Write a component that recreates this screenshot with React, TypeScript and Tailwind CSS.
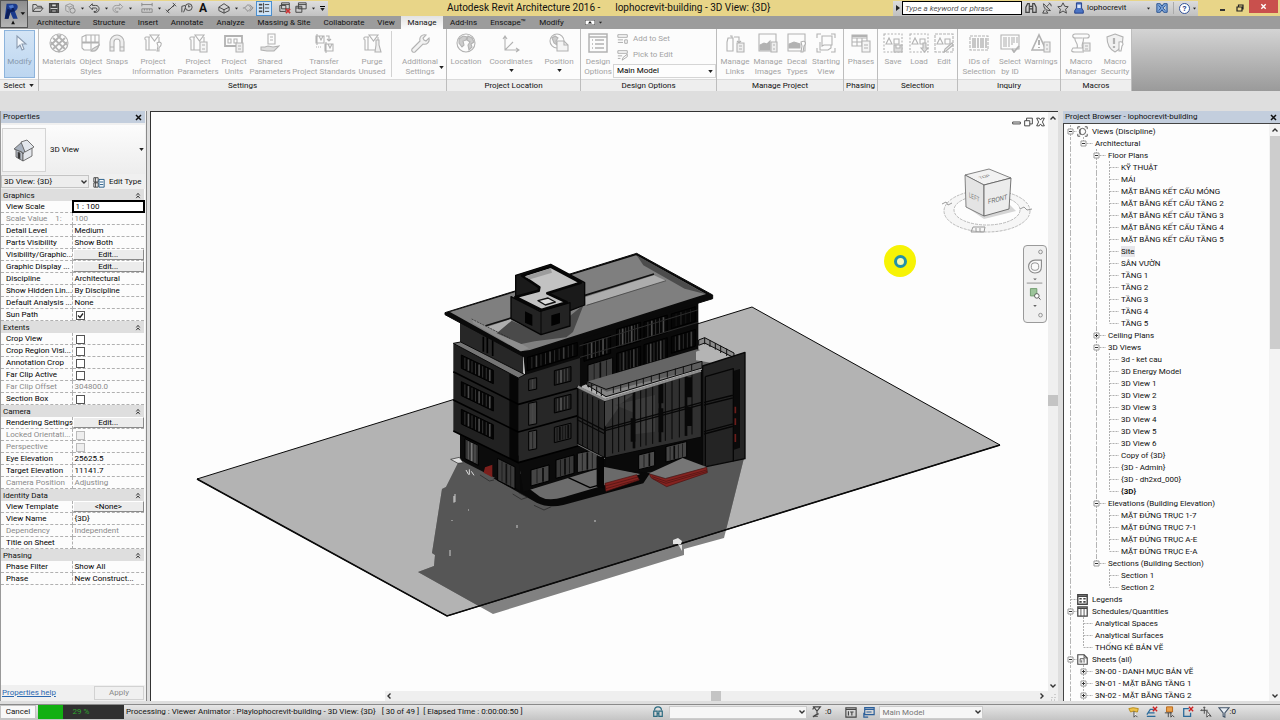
import React from 'react'
import clsx from 'clsx'

type Children = { children?: React.ReactNode }

/* ---------- small drawing helpers ---------- */

function Caret({ className = "" }: { className?: string }) {
  return (
    <svg viewBox="0 0 6 4" className={clsx("w-[5px] h-[3px] shrink-0", className)}>
      <path d="M0 0h6L3 4z" fill="#222" />
    </svg>
  )
}

function Chevron({ d, className = "" }: { d: string; className?: string }) {
  return (
    <svg viewBox="0 0 8 8" className={clsx("w-2 h-2 shrink-0", className)}>
      <path d={d} fill="none" stroke="#333" strokeWidth="1.4" />
    </svg>
  )
}

const UP = "M1.5 5.5L4 3l2.500 2.500"
const DOWN = "M1.500 2.500L4 5l2.500-2.500"
const LEFT = "M5.500 1.500L3 4l2.500 2.500"
const RIGHT = "M2.500 1.500L5 4l-2.500 2.500"

function Gray({ children }: Children) {
  return (
    <svg viewBox="0 0 20 20" className="w-5 h-5 shrink-0" fill="none" stroke="#b2b2b2" strokeWidth="1.100">
      {children}
    </svg>
  )
}

function Tool({ children, className = "" }: Children & { className?: string }) {
  return (
    <svg viewBox="0 0 14 14" className={clsx("w-3 h-3 shrink-0", className)} fill="none" stroke="#444" strokeWidth="1.100">
      {children}
    </svg>
  )
}

/* ---------- ribbon ---------- */

const sheet = (
  <>
    <path d="M3 4h4M3 4c-1.500 0-1.500 3 0 3v10h10" />
    <path d="M6 4v13M7 2h9l-4.500 6z" />
    <path d="M16 4v5" />
  </>
)

const icons: Record<string, React.ReactNode> = {
  cursor: <path d="M7 3v12l3-3 2 5 2-1-2-5h4z" fill="#f4f8fc" stroke="#8b9bb0" />,
  materials: (
    <>
      <circle cx="10" cy="10" r="9" />
      <path d="M4 5l12 11M8 2l10 10M2 9l9 10M16 5L4 16M12 2L2 12M18 9l-9 10" strokeWidth="1.800" />
    </>
  ),
  styles: (
    <>
      <path d="M1 4l4-2h5v7H1zM10 2h8v7h-8M1 10h9v7H3l-2-2zM10 10h8v3M5 2v7M14 2v7" />
      <path d="M10 18c2-4 5-3 8-6-1 4-3 7-8 6z" fill="#ddd" />
    </>
  ),
  snaps: (
    <>
      <path d="M3 18V9a7 7 0 0114 0v9h-4V9a3 3 0 00-6 0v9z" fill="#eee" />
      <path d="M3 14h4M13 14h4" />
    </>
  ),
  info: <>{sheet}<path d="M14 10c3-2 5 0 4 2-1 3-3 1-2 6h-2l1-5z" fill="#fff" /></>,
  params: <>{sheet}<path d="M12 9h7v10h-7z" fill="#f5f5f5" /><path d="M14 12h3M14 16h3" /></>,
  units: (
    <>
      <path d="M1 3h17v10H1z" strokeWidth="1.800" />
      <path d="M4 6h3v4H4zM10 6h3v4h-3z" />
      <path d="M12 10h7v9h-7z" fill="#eee" />
      <path d="M14 13h3M14 16h3" />
    </>
  ),
  shared: (
    <>
      <path d="M8 1h7v10H8zM10 4h3M10 7h3" />
      <path d="M1 14h4l3-1 5 1 6-1-5 5H7l-6-1z" fill="#ddd" />
    </>
  ),
  transfer: (
    <>
      <path d="M2 3h8v7H2zM3 1v11M5 3l2 4 2-4" />
      <path d="M12 3h3v5m-2-2l2 2 2-2" />
      <path d="M11 11h8v7h-8zM12 9v11M14 11l2 4 2-4" />
      <path d="M2 14h6" strokeDasharray="1 1" />
    </>
  ),
  purge: <>{sheet}<path d="M14 7h3v5l2 7h-6l1-7z" fill="#eee" /></>,
  wrench: <path d="M2 16l8-8c-1-4 2-7 6-6l-3 3 1 2 2 1 3-3c1 4-2 7-6 6l-8 8c-2 1-4-1-3-3z" fill="#f2f2f2" />,
  globe: (
    <>
      <circle cx="10" cy="10" r="9" />
      <path d="M3 6l4-3 4 1-1 3-3 1 1 4-2 2-3-4zM12 3l4 2 2 4-3 2 1 3-3 3-1-5 2-3-3-2z" fill="#ccc" />
    </>
  ),
  coords: <path d="M4 4v13h13M4 17l8-8M2 6l2-3 2 3M15 15l3 2-3 2" />,
  position: (
    <>
      <circle cx="8" cy="8" r="7" />
      <path d="M3 5l3-2 3 2-2 3 1 4-3-2z" fill="#ccc" />
      <path d="M8 8h7l4 4v6H8z" fill="#f4f4f4" />
      <path d="M15 8v4h4" />
    </>
  ),
  options: (
    <>
      <path d="M1 1h18v18H1zM1 4h18" strokeWidth="1.500" />
      <path d="M4 7h1M7 7h9M4 11h1M7 11h9M4 15h1M7 15h9" strokeWidth="1.600" />
    </>
  ),
  links: (
    <>
      <path d="M3 5h5v13H2v-9l1-4zM5 3h2v2M9 4h5v6M12 8l2 2 2-2" />
      <path d="M12 10h7v9h-7z" fill="#eee" />
      <path d="M14 13h3M14 16h3" />
    </>
  ),
  images: (
    <>
      <path d="M1 1h17v17H1z" />
      <path d="M2 17v-5l4-2 3 1 3-3v9z" fill="#b2b2b2" />
      <path d="M13 9h6v10h-6z" fill="#eee" />
      <path d="M15 12h2M15 16h2" />
    </>
  ),
  decal: (
    <>
      <path d="M1 1h17v17H1z" />
      <path d="M2 15v-4l5-2 6 2v4z" fill="#b2b2b2" />
      <path d="M14 9c4-2 6 1 3 4l-1 6h-2l1-6z" fill="#fff" />
    </>
  ),
  starting: (
    <>
      <path d="M1 5V1h4M15 1h4v4M1 15v4h4M15 19h4v-4" />
      <path d="M6 3h10v9H8l-2 1zM4 9v8h8l3-2v-3" />
    </>
  ),
  phases: (
    <>
      <path d="M1 2h15v11H1zM1 5h15M1 9h15M6 5v8M11 5v8" />
      <path d="M1 3h15" strokeWidth="2" />
      <path d="M11 8h8v11h-8z" fill="#f4f4f4" />
      <path d="M13 12h4M13 15h4" />
    </>
  ),
  save: (
    <>
      <path d="M1 1h18v18H1z" strokeDasharray="2 1.500" />
      <path d="M3 11l3-6 3 6zM11 6h5v5h-5z" />
      <path d="M11 12h8v7h-8zM13 12v3h4v-3" fill="#ddd" />
    </>
  ),
  load: (
    <>
      <path d="M1 1h18v18H1z" strokeDasharray="2 1.500" />
      <path d="M3 11l3-6 3 6zM11 6h5v5h-5z" />
      <path d="M14 10h3v5h2l-3.500 4-3.500-4h2z" fill="#ddd" />
    </>
  ),
  edit: (
    <>
      <path d="M1 1h18v18H1z" strokeDasharray="3 1" />
      <path d="M3 11l3-6 3 6zM11 6h5v5h-5z" />
      <path d="M10 19l1-3 7-6 1 2-7 6z" fill="#eee" />
    </>
  ),
  ids: (
    <>
      <path d="M1 3h18v14H1z" strokeDasharray="3 1" />
      <path d="M4 5v10M6 5v10M9 5v10M12 5v10M14 5v10M17 5v10" strokeWidth="1.400" />
    </>
  ),
  selectId: (
    <>
      <path d="M1 2h18v14H1zM4 4v10M6 4v10M9 4v10M12 4v8M14 4v6M17 4v6" />
      <path d="M12 16l2 3 5-6" strokeWidth="1.800" />
    </>
  ),
  warnings: (
    <>
      <path d="M1 17L8 2l7 15z" strokeWidth="1.600" />
      <path d="M8 7v5M8 14v1" strokeWidth="2" />
      <path d="M13 9h6v10h-6z" fill="#eee" />
      <path d="M15 12h2M15 16h2" />
    </>
  ),
  macro: (
    <>
      <path d="M4 1h12c3 0 3 4 0 4h-4c2 4-3 6 0 10H2c-3 4 0 4 2 4h9M3 5h8M4 1C1 1 1 5 4 5c-1 4 4 5 2 10" />
      <path d="M12 10h7v8h-7z" fill="#eee" />
      <path d="M14 13h3M14 16h3" />
    </>
  ),
  security: (
    <>
      <path d="M10 1l8 3c0 7-2 12-8 15C4 16 2 11 2 4z" fill="#f1f1f1" />
      <path d="M9 5v6M9 13v2" strokeWidth="2.200" />
      <path d="M14 9c4-1 5 2 3 4l-1 5h-2z" fill="#fff" />
    </>
  ),
}

interface RibbonButtonProps {
  icon: string;
  lines: string[];
  width: string;
  drop?: boolean;
}

function RibbonButton({ icon, lines, width, drop }: RibbonButtonProps) {
  return (
    <button className={clsx("relative flex flex-col items-center shrink-0 pt-1 text-[#a3a3a3]", width)}>
      <Gray>{icons[icon]}</Gray>
      <span className="mt-1 flex flex-col items-center leading-[10px] whitespace-nowrap">
        {lines.map((l) => <span key={l}>{l}</span>)}
      </span>
      {drop && <Caret className={lines.length > 1 ? "absolute right-0 top-[37px]" : "mt-[2px]"} />}
    </button>
  )
}

function Panel({ title, width, children }: Children & { title: React.ReactNode; width: string }) {
  return (
    <section className={clsx("flex flex-col shrink-0 border-r border-[#bdbdbd]", width)}>
      <div className="flex flex-1 bg-[#fcfcfc] pl-[2px]">{children}</div>
      <h2 className="h-3 leading-[11px] bg-[#eeeeee] border-t border-[#dadada] flex items-center justify-center gap-1 whitespace-nowrap">
        {title}
      </h2>
    </section>
  )
}

function Ribbon() {
  return (
    <div className="flex h-[62px] bg-linear-to-b from-[#d4d4d4] to-[#9a9a9a]">
      <Panel width="w-[39px]" title={<>Select <Caret /></>}>
        <button className="relative w-[31px] h-[48px] ml-[2px] mt-[1px] flex flex-col items-center border border-[#8db4dc] bg-linear-to-b from-[#d3e4f5] to-[#bcd6f0] text-[#8799ad] pt-[2px]">
          <Gray>{icons.cursor}</Gray>
          <span className="mt-1 leading-[10px]">Modify</span>
        </button>
      </Panel>
      <Panel width="w-[408px]" title="Settings">
        <RibbonButton icon="materials" lines={["Materials"]} width="w-9" />
        <RibbonButton icon="styles" lines={["Object", "Styles"]} width="w-7" />
        <RibbonButton icon="snaps" lines={["Snaps"]} width="w-6" />
        <RibbonButton icon="info" lines={["Project", "Information"]} width="w-12" />
        <RibbonButton icon="params" lines={["Project", "Parameters"]} width="w-[42px]" />
        <RibbonButton icon="units" lines={["Project", "Units"]} width="w-[30px]" />
        <RibbonButton icon="shared" lines={["Shared", "Parameters"]} width="w-[42px]" />
        <RibbonButton icon="transfer" lines={["Transfer", "Project Standards"]} width="w-[66px]" />
        <RibbonButton icon="purge" lines={["Purge", "Unused"]} width="w-[30px]" />
        <div className="w-px my-[2px] mx-1 bg-[#d2d2d2]" />
        <RibbonButton icon="wrench" lines={["Additional", "Settings"]} width="w-12" drop />
      </Panel>
      <Panel width="w-[134px]" title="Project Location">
        <RibbonButton icon="globe" lines={["Location"]} width="w-[34px]" />
        <RibbonButton icon="coords" lines={["Coordinates"]} width="w-14" drop />
        <RibbonButton icon="position" lines={["Position"]} width="w-10" drop />
      </Panel>
      <Panel width="w-[136px]" title="Design Options">
        <RibbonButton icon="options" lines={["Design", "Options"]} width="w-[30px]" />
        <div className="flex-1 flex flex-col justify-between pt-1 pb-px text-[#a3a3a3]">
          <button className="flex items-center gap-1 h-3 pl-1">
            <Tool className="stroke-[#aaa]"><path d="M1 2h11v3H1zM1 8h6M1 11h6M9 8h3v4H9z" /></Tool>
            Add to Set
          </button>
          <button className="flex items-center gap-1 h-3 pl-1">
            <Tool className="stroke-[#aaa]"><path d="M1 2h11v3H1zM1 8h5M1 11h3M6 13l1-3 5-4v3z" /></Tool>
            Pick to Edit
          </button>
          <label className="relative flex items-center">
            <select aria-label="Design option" className="appearance-none w-full h-[14px] border border-[#d5d5d5] bg-[#fdfdfd] pl-[3px] text-black">
              <option>Main Model</option>
            </select>
            <Caret className="absolute right-[3px]" />
          </label>
        </div>
      </Panel>
      <Panel width="w-[127px]" title="Manage Project">
        <RibbonButton icon="links" lines={["Manage", "Links"]} width="w-8" />
        <RibbonButton icon="images" lines={["Manage", "Images"]} width="w-[34px]" />
        <RibbonButton icon="decal" lines={["Decal", "Types"]} width="w-6" />
        <RibbonButton icon="starting" lines={["Starting", "View"]} width="w-[34px]" />
      </Panel>
      <Panel width="w-[34px]" title="Phasing">
        <RibbonButton icon="phases" lines={["Phases"]} width="w-[30px]" />
      </Panel>
      <Panel width="w-20" title="Selection">
        <RibbonButton icon="save" lines={["Save"]} width="w-[26px]" />
        <RibbonButton icon="load" lines={["Load"]} width="w-[26px]" />
        <RibbonButton icon="edit" lines={["Edit"]} width="w-6" />
      </Panel>
      <Panel width="w-[103px]" title="Inquiry">
        <RibbonButton icon="ids" lines={["IDs of", "Selection"]} width="w-[38px]" />
        <RibbonButton icon="selectId" lines={["Select", "by ID"]} width="w-6" />
        <RibbonButton icon="warnings" lines={["Warnings"]} width="w-[38px]" />
      </Panel>
      <Panel width="w-[71px]" title="Macros">
        <RibbonButton icon="macro" lines={["Macro", "Manager"]} width="w-9" />
        <RibbonButton icon="security" lines={["Macro", "Security"]} width="w-8" />
      </Panel>
    </div>
  )
}

/* ---------- title bar and tabs ---------- */

function Quick({ label, active, children }: Children & { label: string; active?: boolean }) {
  return (
    <button
      aria-label={label}
      className={clsx("w-4 h-[15px] flex items-center justify-center", active && "bg-[#cfe4f7] border border-[#4a8fd0]")}
    >
      <Tool>{children}</Tool>
    </button>
  )
}

function More() {
  return <button aria-label="More" className="w-2 h-[15px] flex items-center justify-center"><Caret className="scale-75" /></button>
}

function TitleBar() {
  return (
    <header className="relative flex items-center h-4 bg-[#e8d588]">
      <button aria-label="Application menu" className="absolute left-0 top-0 z-10 w-7 h-7 border border-[#555] bg-linear-to-b from-[#8d8d8d] to-[#b5b5b5]">
        <svg viewBox="0 0 28 28" className="w-full h-full">
          <path d="M4 19L6 3h9c4 0 4 6 0 8l3 8h-5l-3-7-2 7z" fill="#1b3a8c" />
          <path d="M4 19L7 8l4 2 2-4 2 5-5 1-2 7z" fill="#0c1f5c" />
          <path d="M8 5l5-1 1 3-4 1z" fill="#4d78cc" />
          <path d="M21 12h5l-2.500 3z" fill="#111" />
          <path d="M11 25l2-4 2 4z" fill="#111" />
        </svg>
      </button>
      <div className="flex items-center h-[15px] w-[328px] pl-[30px] bg-linear-to-b from-[#dedede] to-[#c2c2c2]">
        <Quick label="Open"><path d="M1 11V3h4l1 2h5v2M1 11l3-4h9l-3 4z" /></Quick>
        <Quick label="Save"><path d="M2 2h10v10H2zM4 2v4h6V2M4 12V9h6v3" strokeWidth="1.800" /></Quick>
        <Quick label="Sync"><path d="M2 4l5-2 4 2v4M2 4v6l4 2M2 4l4 2 5-2M6 6v3" stroke="#999" /><circle cx="10" cy="10" r="3" stroke="#888" /></Quick>
        <More />
        <Quick label="Undo"><path d="M5 2L1.500 5.500 5 9V7h4c2 0 2 3 0 4H7v1h3c4-1 4-8-1-8H5z" /></Quick>
        <More />
        <Quick label="Redo"><path d="M9 2l3.500 3.500L9 9V7H5C3 7 3 10 5 11h2v1H4C0 11 0 4 5 4h4z" stroke="#999" /></Quick>
        <More />
        <span className="w-[5px]" />
        <Quick label="Measure"><path d="M1 3h12M1 1v4M13 1v4M1 8h12v4H1zM4 8v2M7 8v2M10 8v2" stroke="#888" /></Quick>
        <More />
        <Quick label="Aligned dimension"><path d="M2 12L12 2M1 9l4 4M9 1l4 4M3 11l2-3M11 3L9 6" /></Quick>
        <Quick label="Tag"><path d="M1 12V5l4-1M3 12l2-5" /><circle cx="9" cy="6" r="4" /><path d="M9 3v3l2-1" /></Quick>
        <button aria-label="Text" className="w-4 text-[12px] leading-[15px] font-bold">A</button>
        <span className="w-[5px]" />
        <Quick label="3D view"><path d="M1 6l6-4 6 4v4l-6 3-6-3zM1 6l6 3 6-3M7 9v4" /></Quick>
        <More />
        <Quick label="Section"><path d="M7 3l4 4-4 4-4-4zM1 7h2M9 3l4 4-4 4" stroke="#888" /></Quick>
        <Quick label="Thin lines" active><path d="M1 3h4M1 7h4M1 11h4" strokeWidth="2" /><path d="M8 3h5M8 7h5M8 11h5M6.500 1v12" /></Quick>
        <span className="w-[5px]" />
        <Quick label="Close hidden"><path d="M3 1h9v7H3zM1 4h7v7H1zM3 3h9" /><path d="M8 8l5 5M13 8l-5 5" stroke="#c33" strokeWidth="1.800" /></Quick>
        <Quick label="Switch windows"><path d="M4 1h9v7H4zM1 5h7v7H1zM1 7h7M4 3h9" /></Quick>
        <More />
        <button aria-label="Customize" className="w-[10px] flex flex-col items-center gap-[1px]">
          <span className="w-[5px] h-px bg-black" />
          <Caret />
        </button>
      </div>
      <h1 className="flex-1 pl-[119px] text-[10px] leading-4 whitespace-pre">
        Autodesk Revit Architecture 2016 -{"      "}lophocrevit-building - 3D View: {"{3D}"}
      </h1>
      <div className="flex items-center h-[15px] w-[305px] bg-linear-to-b from-[#dcdcdc] to-[#c0c0c0]">
        <svg viewBox="0 0 4 6" className="w-1 h-[6px] ml-[3px] mr-[2px]"><path d="M0 0l4 3-4 3z" fill="#222" /></svg>
        <input aria-label="Search help" placeholder="Type a keyword or phrase" className="w-[120px] h-[14px] border border-black bg-white px-[2px] italic placeholder:text-[#555]" />
        <button aria-label="Search" className="ml-[3px]">
          <Tool><path d="M1 12V6l2-4h2v10zM9 12V2h2l2 4v6zM5 5h4v3H5z" strokeWidth="1.400" /></Tool>
        </button>
        <button aria-label="Subscription" className="ml-1">
          <Tool><path d="M3 2c0 6 3 8 8 8zM6 6l4-4M9 1a4 4 0 013 4M4 9l-2 4h6l-2-3" /></Tool>
        </button>
        <button aria-label="Favorites" className="ml-1">
          <Tool><path d="M7 1l2 4 4 .5-3 3 1 4.500-4-2.500L3 13l1-4.500-3-3L5 5z" /></Tool>
        </button>
        <button className="ml-1 flex items-center gap-[2px]">
          <Tool><path d="M4 1h6v6l2 3v3H2v-3l2-3z" fill="#4b74c4" stroke="#24408a" /><path d="M5 3h4v4H5z" fill="#dfe8f8" stroke="none" /></Tool>
          lophocrevit
        </button>
        <span className="flex-1" />
        <More />
        <button aria-label="Exchange apps" className="ml-1">
          <Tool><path d="M1 2h4l2 3 2-3h4v10H9L7 9l-2 3H1zM3 4l3 3-3 3M11 4L8 7l3 3" stroke="#234f8e" fill="#7fa6da" /></Tool>
        </button>
        <span className="w-px h-3 bg-[#aaa] mx-[5px]" />
        <button aria-label="Help" className="w-[11px] h-[11px] rounded-full border border-[#34549a] text-[#24408a] bg-white leading-[9px] font-bold">?</button>
        <More />
      </div>
      <div className="flex w-[82px] h-full justify-end pr-[2px]">
        <button aria-label="Minimize" className="w-[17px] flex items-center justify-center pt-[3px]"><span className="w-[5px] h-[2px] bg-[#333]" /></button>
        <button aria-label="Restore" className="w-[17px] flex items-center justify-center mr-[1px]">
          <svg viewBox="0 0 8 8" className="w-2 h-2" fill="none" stroke="#222" strokeWidth="1.200"><path d="M1 3h5v4H1zM2.500 3V1H7v4H6" /></svg>
        </button>
        <button aria-label="Close" className="w-[29px] h-[13px] bg-[#c9504d] flex items-center justify-center">
          <svg viewBox="0 0 8 8" className="w-[7px] h-[7px]"><path d="M1.500 1.500l5 5M6.500 1.500l-5 5" stroke="#fff" strokeWidth="1.600" /></svg>
        </button>
      </div>
    </header>
  )
}

const tabs = [
  { name: "Architecture", w: "w-[55px]" },
  { name: "Structure", w: "w-[46px]" },
  { name: "Insert", w: "w-8" },
  { name: "Annotate", w: "w-[46px]" },
  { name: "Analyze", w: "w-[41px]" },
  { name: "Massing & Site", w: "w-[66px]" },
  { name: "Collaborate", w: "w-[54px]" },
  { name: "View", w: "w-[30px]" },
  { name: "Manage", w: "w-[42px]" },
  { name: "Add-Ins", w: "w-[41px]" },
  { name: "Enscape™", w: "w-12" },
  { name: "Modify", w: "w-[39px]" },
]

function Tabs() {
  return (
    <nav className="flex h-[13px] pl-[31px] bg-[#9c9c9c]">
      {tabs.map((t) => (
        <button
          key={t.name}
          className={clsx("leading-[13px] whitespace-nowrap", t.w, t.name === "Manage" && "bg-linear-to-b from-[#e2e2e2] to-[#fcfcfc]")}
        >
          {t.name}
        </button>
      ))}
      <button aria-label="Ribbon display" className="flex items-center gap-[3px] ml-[14px]">
        <svg viewBox="0 0 10 5" className="w-[10px] h-[5px]"><path d="M0 0h10v5H0z" fill="#fff" stroke="#444" /><path d="M3 3.500h4L5 1z" fill="#222" /></svg>
        <Caret className="scale-75" />
      </button>
    </nav>
  )
}

/* ---------- properties palette ---------- */

type Prop = { name: string; value?: string; kind?: "edit" | "check" | "input"; off?: boolean; on?: boolean }

const groups: { title: string; rows: Prop[] }[] = [
  {
    title: "Graphics",
    rows: [
      { name: "View Scale", value: "1 : 100", kind: "input" },
      { name: "Scale Value    1:", value: "100", off: true },
      { name: "Detail Level", value: "Medium" },
      { name: "Parts Visibility", value: "Show Both" },
      { name: "Visibility/Graphic...", value: "Edit...", kind: "edit" },
      { name: "Graphic Display ...", value: "Edit...", kind: "edit" },
      { name: "Discipline", value: "Architectural" },
      { name: "Show Hidden Lin...", value: "By Discipline" },
      { name: "Default Analysis ...", value: "None" },
      { name: "Sun Path", kind: "check", on: true },
    ],
  },
  {
    title: "Extents",
    rows: [
      { name: "Crop View", kind: "check" },
      { name: "Crop Region Visi...", kind: "check" },
      { name: "Annotation Crop", kind: "check" },
      { name: "Far Clip Active", kind: "check" },
      { name: "Far Clip Offset", value: "304800.0", off: true },
      { name: "Section Box", kind: "check" },
    ],
  },
  {
    title: "Camera",
    rows: [
      { name: "Rendering Settings", value: "Edit...", kind: "edit" },
      { name: "Locked Orientati...", kind: "check", off: true },
      { name: "Perspective", kind: "check", off: true },
      { name: "Eye Elevation", value: "25625.5" },
      { name: "Target Elevation", value: "11141.7" },
      { name: "Camera Position", value: "Adjusting", off: true },
    ],
  },
  {
    title: "Identity Data",
    rows: [
      { name: "View Template", value: "<None>", kind: "edit" },
      { name: "View Name", value: "{3D}" },
      { name: "Dependency", value: "Independent", off: true },
      { name: "Title on Sheet", value: "" },
    ],
  },
  {
    title: "Phasing",
    rows: [
      { name: "Phase Filter", value: "Show All" },
      { name: "Phase", value: "New Construct..." },
    ],
  },
]

function PropValue({ p }: { p: Prop }) {
  if (p.kind === "input") {
    return <input aria-label={p.name} defaultValue={p.value} className="block w-full h-[11px] border border-black outline outline-black bg-white px-[2px]" />
  }
  if (p.kind === "edit") {
    return <button className="block w-full h-[11px] leading-[9px] bg-[#ececec] border border-[#fff] border-r-[#8a8a8a] border-b-[#8a8a8a]">{p.value}</button>
  }
  if (p.kind === "check") {
    return (
      <span className="relative flex items-end h-[11px] pl-[3px]">
        <input
          type="checkbox"
          aria-label={p.name}
          defaultChecked={p.on}
          disabled={p.off}
          className="peer appearance-none w-[9px] h-[9px] border border-[#555] bg-white disabled:border-[#bbb] disabled:bg-[#eee]"
        />
        <svg viewBox="0 0 9 9" className="absolute left-[3px] w-[9px] h-[9px] hidden peer-checked:block pointer-events-none">
          <path d="M2 4.500l2 2 3-4" fill="none" stroke="#222" strokeWidth="1.300" />
        </svg>
      </span>
    )
  }
  return <span className="block pl-[2px] truncate">{p.value}</span>
}

function PaletteTitle({ title }: { title: string }) {
  return (
    <div className="flex items-center justify-between h-3 pl-[2px] pr-[3px] bg-[#c3cedd]">
      <h2>{title}</h2>
      <button aria-label={`Close ${title}`}>
        <svg viewBox="0 0 7 7" className="w-[7px] h-[7px]"><path d="M1 1l5 5M6 1L1 6" stroke="#111" strokeWidth="1.500" /></svg>
      </button>
    </div>
  )
}

function Properties() {
  return (
    <aside className="w-[147px] shrink-0 flex flex-col border-r border-[#8a8a8a] border-l border-l-[#999] pr-[1px] bg-[#f0f0f0]">
      <PaletteTitle title="Properties" />
      <div className="flex items-center h-[49px] mt-[2px] px-[1px] bg-linear-to-b from-[#fcfcfc] to-[#ededed]">
        <div className="w-[44px] h-[44px] border border-[#d4d4d4] bg-[#f7f7f7] flex items-center justify-center">
          <svg viewBox="0 0 24 24" className="w-6 h-6" stroke="#555" strokeWidth=".8">
            <path d="M4 11l7 4v8l-7-4z" fill="#b9bfc8" />
            <path d="M11 14l9-4v8l-9 5z" fill="#e4e7ec" />
            <path d="M2 11l8-7 3 9-2 3-1-2z" fill="#a9b2be" />
            <path d="M9 4l6-2 7 7-9 5z" fill="#e3e7ec" />
            <path d="M6 14l2 1v6l-2-1z" fill="#222" />
          </svg>
        </div>
        <span className="flex-1 pl-1">3D View</span>
        <Caret />
      </div>
      <div className="flex items-center h-[15px]">
        <label className="relative flex items-center w-[88px]">
          <select aria-label="Instance" className="appearance-none w-full h-[13px] border border-[#c4c4c4] bg-[#ededed] pl-[2px]">
            <option>{"3D View: {3D}"}</option>
          </select>
          <Chevron d={DOWN} className="absolute right-[1px]" />
        </label>
        <button className="flex items-center gap-1 pl-1">
          <Tool><path d="M1 2h5v5H1zM1 8h5v5H1zM3 2v11" /><path d="M7 4h6v9H7z" fill="#fff" stroke="#235a86" /><path d="M8 7h4M8 10h4" stroke="#235a86" /></Tool>
          Edit Type
        </button>
      </div>
      <div className="flex-1 bg-[#fcfcfc] pr-[1px]">
        <table className="w-full table-fixed border-separate border-spacing-0 leading-[11px]">
          <tbody>
            {groups.map((g) => (
              <React.Fragment key={g.title}>
                <tr className="bg-[#dedede]">
                  <th colSpan={2} className="h-3 p-0 pl-[2px] text-left font-normal">
                    <span className="flex items-center justify-between pr-[3px]">
                      {g.title}
                      <svg viewBox="0 0 6 8" className="w-[6px] h-[7px]" fill="none" stroke="#222"><path d="M1 4l2-2.500L5 4M1 7l2-2.500L5 7" /></svg>
                    </span>
                  </th>
                </tr>
                {g.rows.map((p) => (
                  <tr key={p.name} className={p.off ? "text-[#8a8a8a]" : "text-black"}>
                    <td className="w-[73px] h-3 p-0 pl-[5px] whitespace-pre overflow-hidden border-b border-r border-dashed border-[#b0b0b0]">{p.name}</td>
                    <td className="h-3 p-0 border-b border-dashed border-[#b0b0b0]"><PropValue p={p} /></td>
                  </tr>
                ))}
              </React.Fragment>
            ))}
          </tbody>
        </table>
      </div>
      <div className="flex items-center justify-between h-4 pl-[1px] pr-[1px]">
        <a href="#help" className="text-[#2a68b0] underline">Properties help</a>
        <button className="w-[50px] h-[14px] border border-[#d2d2d2] text-[#8a8a8a]">Apply</button>
      </div>
    </aside>
  )
}

/* ---------- drawing area ---------- */

interface BarsProps {
  x: number;
  y: number;
  w: number;
  h: number;
  n: number;
  k: number; // slope of the wall
  fill?: string;
  line?: string;
}

/* window band on a slanted wall, split by n mullions */
function Bars({ x, y, w, h, n, k, fill = "#060606", line = "#555" }: BarsProps) {
  const step = w / n
  return (
    <g>
      <path d={`M${x} ${y}l${w} ${w * k}v${h}l${-w} ${-w * k}z`} fill={fill} stroke="#000" strokeWidth="3" />
      {Array.from({ length: n - 1 }, (_, i) => {
        const dx = step * (i + 1)
        return <path key={i} d={`M${x + dx} ${y + dx * k + 3}v${h - 6}`} stroke={line} strokeWidth={i % 3 === 1 ? 5 : 2} />
      })}
    </g>
  )
}

const SHADOW = "M458 463L446 487 442 489 432 553 435 555 434 566 418 572 493 614 684 555 684 549 724 538 744 458 640 440z"
const SITE = "M197 479L752 307 1000 445 447 616z"

function Building() {
  return (
    <g transform="translate(430 240) scale(.33333)" strokeLinejoin="round">
      {/* entrance slab */}
      <path d="M190 715L320 788Q355 805 400 795L640 730 660 700 500 640 280 700z" fill="#080808" />
      <path d="M300 748L500 680 630 703 525 735 400 772Q355 785 330 770z" fill="#6c6c6c" />
      <path d="M415 713l65 30 42-12" fill="none" stroke="#000" strokeWidth="4" />

      {/* ground floor */}
      <path d="M90 560L270 650V752L90 660z" fill="#0c0c0c" />
      <path d="M265 660L510 590V685L280 755z" fill="#0b0b0b" />
      <Bars x={105} y={596} w={40} h={60} n={4} k={0.5} fill="#333" line="#777" />
      <Bars x={203} y={655} w={52} h={66} n={4} k={0.5} fill="#3a3a3a" line="#111" />
      <Bars x={303} y={690} w={54} h={48} n={3} k={-0.28} fill="#454545" line="#0a0a0a" />
      <Bars x={378} y={660} w={54} h={55} n={4} k={-0.28} fill="#383838" line="#0a0a0a" />
      <Bars x={442} y={640} w={60} h={58} n={4} k={-0.2} fill="#4b4b4b" line="#0a0a0a" />
      <path d="M165 682l22-8v38l-26-14z" fill="#7c1f1c" />

      {/* block walls */}
      <path d="M70 310L265 408V668L70 573z" fill="#212121" />
      <path d="M265 408L455 348V615L265 668z" fill="#272727" />
      <path d="M238 396l28 14v258l-28-14z" fill="#060606" />
      <path d="M70 395l195 98 190-52M70 480l195 96 190-52M70 573l195 95 190-53" fill="none" stroke="#000" strokeWidth="5" />
      <Bars x={94} y={345} w={96} h={40} n={9} k={0.48} line="#4a4a4a" />
      <Bars x={94} y={425} w={96} h={42} n={9} k={0.48} line="#4a4a4a" />
      <Bars x={94} y={508} w={96} h={44} n={9} k={0.48} line="#4a4a4a" />
      <Bars x={296} y={418} w={24} h={34} n={2} k={-0.2} fill="#333" />
      <Bars x={296} y={490} w={24} h={66} n={2} k={-0.2} fill="#424242" line="#4d4d4d" />
      <Bars x={296} y={575} w={24} h={56} n={2} k={-0.2} fill="#424242" line="#111" />
      <Bars x={373} y={392} w={50} h={44} n={5} k={-0.25} fill="#1c1c1c" line="#565656" />
      <Bars x={373} y={475} w={50} h={44} n={5} k={-0.25} fill="#1c1c1c" line="#565656" />
      <Bars x={373} y={562} w={50} h={46} n={6} k={-0.25} fill="#2b2b2b" line="#0a0a0a" />

      {/* upper floor */}
      <path d="M90 240L280 340V408L90 315z" fill="#272727" />
      <path d="M160 290v45M172 290v50M188 300v48" stroke="#000" strokeWidth="5" />
      <path d="M70 310l22-4 193 98-20 10z" fill="#757575" stroke="#0a0a0a" strokeWidth="3" />
      <path d="M280 338L805 180V330L480 428 450 440V354L285 405z" fill="#0a0a0a" />
      <Bars x={292} y={352} w={150} h={40} n={11} k={-0.3} line="#3c3c3c" />
      <Bars x={462} y={310} w={80} h={54} n={7} k={-0.3} line="#4d4d4d" />
      <Bars x={560} y={268} w={72} h={56} n={8} k={-0.3} line="#4f4f4f" />
      <Bars x={642} y={246} w={70} h={52} n={6} k={-0.3} line="#4a4a4a" />
      <Bars x={724} y={222} w={72} h={44} n={5} k={-0.3} line="#1c1c1c" />
      <Bars x={474} y={375} w={74} h={66} n={4} k={-0.3} fill="#3d3d3d" line="#0a0a0a" />
      <Bars x={560} y={340} w={72} h={60} n={7} k={-0.3} line="#3a3a3a" />
      <Bars x={642} y={314} w={70} h={62} n={7} k={-0.3} line="#444" />
      <Bars x={724} y={290} w={72} h={50} n={6} k={-0.3} line="#3c3c3c" />
      <path d="M448 318l355-108M450 352l355-105" fill="none" stroke="#2c2c2c" strokeWidth="3" />

      {/* main roof */}
      <path d="M45 218L620 40 848 165V176L280 350 45 224z" fill="#0a0a0a" stroke="#0a0a0a" strokeWidth="3" />
      <path d="M60 216L618 46 828 162 300 330 272 334z" fill="#7f7f7f" />
      <path d="M620 46L640 76 764 146 828 163z" fill="#4c4c4c" />
      <path d="M465 172L672 106 708 122 466 196z" fill="#adadad" />
      <path d="M465 166L672 102" stroke="#111" strokeWidth="5" />
      <path d="M470 196l238-74" stroke="#333" strokeWidth="2" />
      <path d="M170 262l74-26v30l-44 14z" fill="#adadad" />
      <path d="M165 258l78-24" stroke="#111" strokeWidth="5" />
      <path d="M125 237l120 58 52 30-24 9L130 250z" fill="#8e8e8e" />
      <path d="M200 280l45-38 90 40 80-50 46-38-32 82-20 16-95 12-40 8z" fill="#4a4a4a" />
      <path d="M125 237l115 58" stroke="#222" strokeWidth="2" strokeDasharray="6 3" />

      {/* stair tower */}
      <path d="M257 106L362 73 464 128V195L420 212 380 230 257 180z" fill="#1a1a1a" stroke="#060606" strokeWidth="4" />
      <path d="M243 170L330 214 420 188V258L333 284 243 236z" fill="#232323" stroke="#060606" strokeWidth="4" />
      <path d="M276 107L362 80 452 128 352 160 410 187 334 210 256 171 326 152 328 142z" fill="#c2c2c2" stroke="#060606" strokeWidth="8" />
      <path d="M284 110L362 85 366 98 300 118z" fill="#9c9c9c" />
      <path d="M324 182l30-8 22 12-30 9z" fill="#dcdcdc" stroke="#111" strokeWidth="4" />
      <path d="M333 214v70" stroke="#060606" strokeWidth="3" />
      <path d="M285 214l22 10v34l-22-10zM364 226l26-8v32l-26 8z" fill="#020202" />

      {/* terrace */}
      <path d="M470 425L800 328 912 350 818 384 530 455z" fill="#656565" />
      <path d="M798 335l30-12 82 28-50 20-62-10z" fill="#b4b4b4" />
      <path d="M806 300l18-7 88 46v14l-88-44-18 7z" fill="#444" fillOpacity=".35" stroke="#0a0a0a" strokeWidth="3" />
      <path d="M824 293v20M840 301v20M856 309v20M872 317v22M890 326v22" stroke="#111" strokeWidth="3" />

      {/* glass wing */}
      <path d="M443 440L525 480V655L443 612z" fill="#2a2a2a" stroke="#060606" strokeWidth="5" />
      <path d="M525 480L815 392V592L525 655z" fill="#303030" stroke="#060606" strokeWidth="5" />
      <path d="M525 485l90-25-40 30-50 70z" fill="#424242" />
      <path d="M615 520l-60-25 120-30v110l-60 8z" fill="#3c3c3c" />
      {[458, 472, 488, 506].map((x) => <path key={x} d={`M${x} ${448 + (x - 443) / 2}v168`} stroke="#080808" strokeWidth="3" />)}
      {[548, 566, 584, 612, 632, 648, 668, 690, 706, 726, 748, 768, 786].map((x, i) => (
        <path key={x} d={`M${x} ${478 - (x - 525) * 0.3}v${168 + (x - 525) * 0.06}`} stroke="#080808" strokeWidth={i % 4 === 3 ? 8 : 3} />
      ))}
      <path d="M443 530l82 42 290-78M443 540l82 42M525 565l290-78" fill="none" stroke="#080808" strokeWidth="4" />
      <path d="M602 535h14v70h-14zM686 430h14v60h-14zM686 505h14v72h-14zM766 412h20v60h-20zM768 500h18v58h-18z" fill="#080808" />
      <path d="M443 440l82 40 288-88" fill="none" stroke="#8d8d8d" strokeWidth="7" />
      <path d="M443 614l82 42" stroke="#777" strokeWidth="3" />
      <path d="M470 424v10l58 36 288-86v-20l-288 84z" fill="#555" fillOpacity=".5" stroke="#0a0a0a" strokeWidth="3" />
      {[485, 500, 514].map((x) => <path key={x} d={`M${x} ${432 + (x - 485) * 0.5}v22`} stroke="#111" strokeWidth="3" />)}
      {[550, 572, 596, 620, 640, 664, 688, 712, 736, 760, 785].map((x) => (
        <path key={x} d={`M${x} ${446 - (x - 528) * 0.29}v20`} stroke="#111" strokeWidth="3" />
      ))}

      {/* recess under the wing */}
      <path d="M525 655L818 590V680L700 700 530 690z" fill="#0a0a0a" />
      <path d="M520 680l110 22-104 30z" fill="#6a6a6a" />
      <Bars x={626} y={645} w={48} h={44} n={3} k={-0.25} fill="#4c4c4c" line="#0a0a0a" />
      <Bars x={708} y={620} w={62} h={46} n={5} k={-0.25} fill="#454545" line="#0a0a0a" />
      <path d="M500 650h22v95l-22-5z" fill="#050505" />

      {/* side slab */}
      <path d="M818 378L945 337V656L818 682z" fill="#242424" stroke="#080808" strokeWidth="4" />
      <path d="M826 410l84-24v278M826 410v268M822 495l90-22M822 582l90-24M822 487l90-22M822 575l90-24" fill="none" stroke="#060606" strokeWidth="4" />
      <path d="M912 392l18-5v236l-18 6z" fill="#0a0a0a" />
      <path d="M916 500v20M916 535v20M916 582v24" stroke="#6b1d1a" strokeWidth="5" />

      {/* entrance steps */}
      <path d="M658 700l100-46 74 28-126 32z" fill="#767676" />
      <path d="M658 702l48 14 124-34 2 16-122 42-46-26z" fill="#842320" stroke="#4a1210" strokeWidth="2" />
      <path d="M525 730l95-26 8 16-100 34z" fill="#842320" stroke="#4a1210" strokeWidth="2" />
      <path d="M666 710l42 14 122-34M668 716l40 14 124-36M526 738l98-27M528 746l98-28" fill="none" stroke="#4a1210" strokeWidth="2" />

      {/* loose outlines on the ground */}
      <path d="M62 658l26-6 12 16-16 2z" fill="#ddd" stroke="#222" strokeWidth="2" />
      <path d="M150 705l28 18 14-3M248 762l26 16 18-6-26-14M312 796l30 14 22-10" fill="none" stroke="#222" strokeWidth="2" />
      <path d="M108 690l8 14M118 688v16M124 694l8 12M72 768v20" stroke="#ddd" strokeWidth="3" />
    </g>
  )
}

function Scene() {
  return (
    <svg viewBox="151 112 897 579" preserveAspectRatio="xMidYMid slice" className="w-full h-full">
      <clipPath id="site"><path d={SITE} /></clipPath>
      <path d={SITE} fill="#b3b3b3" />
      <path d={SHADOW} fill="#818181" />
      <path d={SHADOW} fill="#565656" clipPath="url(#site)" />
      <path d={SITE} fill="none" stroke="#0a0a0a" strokeWidth="1" />
      <path d="M197 479L447 616 1000 445" fill="none" stroke="#0a0a0a" strokeWidth="1.600" />
      <path d="M673 540l5-2 4 3-1 3h-8zM678 544l4 1v6z" fill="#e4e4e4" />
      <path d="M455 494v8M450 550v6M452 520v1M517 525v3M595 520v2M468 510h1" stroke="#ccc" strokeWidth="1" />
      <Building />
    </svg>
  )
}

function ViewCube() {
  return (
    <svg viewBox="0 0 92 70" className="absolute right-[15px] top-[54px] w-[92px] h-[70px]" fontFamily="Liberation Sans, sans-serif">
      <ellipse cx="46" cy="45" rx="43" ry="21" fill="#f6f6f6" stroke="#aaa" strokeWidth=".8" strokeDasharray="3 1" />
      <ellipse cx="46" cy="44" rx="33" ry="15" fill="#fdfdfd" stroke="#aaa" strokeWidth=".8" strokeDasharray="3 1" />
      <path d="M24 40l19 13 32-8-12-12z" fill="#d5d5d5" />
      <path d="M24 9L48 3 70 12 43 19z" fill="#f2f2f2" stroke="#666" strokeWidth=".8" />
      <path d="M24 9l19 10v31L25 41z" fill="#e4e4e4" stroke="#666" strokeWidth=".8" />
      <path d="M43 19l27-7-2 31-25 7z" fill="#ececec" stroke="#555" strokeWidth=".8" />
      <text x="0" y="0" fontSize="7" fill="#777" transform="matrix(.6 .3 0 1 28 31)">LEFT</text>
      <text x="0" y="0" fontSize="7" fill="#666" transform="matrix(.8 -.2 0 1 47 38)">FRONT</text>
      <text x="0" y="0" fontSize="6" fill="#777" transform="matrix(.9 -.2 .5 .5 39 13)">TOP</text>
      <g fill="none" stroke="#999">
        <path d="M1 38l4-2 2 3 4-2M79 43l4-2 3 3 5-1M30 66l2-5h12l-1 5zM35 62v4M39 62v4" />
      </g>
    </svg>
  )
}

function NavBar() {
  return (
    <div className="absolute right-[1px] top-[133px] w-6 h-[78px] rounded-[4px] border border-[#9a9a9a] bg-[#f0f0f0]">
      <svg viewBox="0 0 24 78" className="w-full h-full" fill="none" stroke="#8a8a8a">
        <circle cx="18" cy="4" r="2" />
        <path d="M5 20c0-4 3-7 7-7h7v7c0 5-3 7-7 7s-7-3-7-7z" strokeWidth="1.200" fill="#fafafa" />
        <rect x="8" y="16" width="8" height="8" rx="3" />
        <path d="M10 33h4l-2 2z" fill="#666" stroke="none" />
        <path d="M3 38h17" />
        <path d="M7 44h7v8H7z" fill="#9cc49a" stroke="#6d9a6b" />
        <circle cx="14" cy="52" r="2.500" fill="#fff" stroke="#555" />
        <path d="M16 54l2 2" stroke="#444" />
        <path d="M10 62h4l-2 2z" fill="#666" stroke="none" />
        <circle cx="18" cy="73" r="2" />
      </svg>
    </div>
  )
}

function Viewport() {
  return (
    <main className="flex-1 min-w-0 flex flex-col ml-[3px] border-l border-t border-[#333] bg-[#fdfdfd]">
      <div className="flex flex-1 min-h-0">
        <div className="relative flex-1 min-w-0 overflow-hidden">
          <Scene />
          <div className="absolute right-[3px] top-[4px] flex items-center gap-[3px]">
            <button aria-label="Minimize view"><Tool className="w-[9px]"><path d="M1 7h12v3H1z" strokeWidth="1.500" /></Tool></button>
            <button aria-label="Restore view"><Tool className="w-[9px]"><path d="M1 5h8v8H1zM4 5V1h9v9H9" strokeWidth="1.500" /></Tool></button>
            <button aria-label="Close view"><Tool className="w-[9px]"><path d="M1 1h4l2 3 2-3h4l-3 6 3 6H9l-2-3-2 3H1l3-6z" strokeWidth="1.500" /></Tool></button>
          </div>
          <ViewCube />
          <NavBar />
          {/* busy pointer */}
          <span className="absolute right-[132px] top-[133px] w-8 h-8 rounded-full bg-[#f7f305] flex items-center justify-center">
            <span className="w-[13px] h-[13px] rounded-full border-[3px] border-[#2390a8] bg-[#f7f9b0]" />
          </span>
        </div>
        <div className="w-[10px] flex flex-col items-center bg-[#efefef]">
          <Chevron d={UP} className="mt-[2px]" />
          <span className="w-[10px] h-[11px] mt-[273px] bg-[#c4c4c4]" />
          <span className="flex-1" />
          <Chevron d={DOWN} className="mb-[1px]" />
        </div>
      </div>
      <div className="flex h-[10px] pl-[234px]">
        <div className="flex flex-1 items-center justify-between bg-[#efefef]">
          <Chevron d={LEFT} />
          <span className="w-[10px] h-[10px] bg-[#c4c4c4]" />
          <Chevron d={RIGHT} />
        </div>
        <svg viewBox="0 0 10 10" className="w-[12px] h-[10px] bg-[#efefef]"><path d="M8 3v1M8 6v1M5 6v1M8 9h-1M5 9H4" stroke="#aaa" /></svg>
      </div>
    </main>
  )
}

/* ---------- project browser ---------- */

interface TreeItem {
  t: string;
  kids?: TreeItem[];
  open?: boolean; // more siblings follow below the fold
  icon?: string;
  mark?: "plus" | "minus";
  tone?: string;
}

const leaf = (...names: string[]): TreeItem[] => names.map((t) => ({ t }))

const tree: TreeItem[] = [
  {
    t: "Views (Discipline)", icon: "views", mark: "minus",
    kids: [
      {
        t: "Architectural", mark: "minus",
        kids: [
          {
            t: "Floor Plans", mark: "minus",
            kids: [
              ...leaf("KỸ THUẬT", "MÁI", "MẶT BẰNG KẾT CẤU MÓNG", "MẶT BẰNG KẾT CẤU TẦNG 2", "MẶT BẰNG KẾT CẤU TẦNG 3", "MẶT BẰNG KẾT CẤU TẦNG 4", "MẶT BẰNG KẾT CẤU TẦNG 5"),
              { t: "Site", tone: "bg-[#e6e6ea]" },
              ...leaf("SÂN VƯỜN", "TẦNG 1", "TẦNG 2", "TẦNG 3", "TẦNG 4", "TẦNG 5"),
            ],
          },
          { t: "Ceiling Plans", mark: "plus" },
          {
            t: "3D Views", mark: "minus",
            kids: [
              ...leaf("3d - ket cau", "3D Energy Model", "3D View 1", "3D View 2", "3D View 3", "3D View 4", "3D View 5", "3D View 6", "Copy of {3D}", "{3D - Admin}", "{3D - dh2xd_000}"),
              { t: "{3D}", tone: "font-bold" },
            ],
          },
          { t: "Elevations (Building Elevation)", mark: "minus", kids: leaf("MẶT ĐỨNG TRỤC 1-7", "MẶT ĐỨNG TRỤC 7-1", "MẶT ĐỨNG TRỤC A-E", "MẶT ĐỨNG TRỤC E-A") },
          { t: "Sections (Building Section)", mark: "minus", kids: leaf("Section 1", "Section 2") },
        ],
      },
    ],
  },
  { t: "Legends", icon: "legend" },
  { t: "Schedules/Quantities", icon: "schedule", mark: "minus", kids: leaf("Analytical Spaces", "Analytical Surfaces", "THỐNG KÊ BẢN VẼ") },
  {
    t: "Sheets (all)", icon: "sheets", mark: "minus", open: true,
    kids: [
      { t: "3N-00 - DANH MỤC BẢN VẼ", mark: "plus" },
      { t: "3N-01 - MẶT BẰNG TẦNG 1", mark: "plus" },
      { t: "3N-02 - MẶT BẰNG TẦNG 2", mark: "plus", open: true },
    ],
  },
]

const treeIcons: Record<string, React.ReactNode> = {
  views: <><path d="M1 4V1h3M10 1h3v3M1 10v3h3M10 13h3v-3" /><circle cx="7" cy="7" r="4" /><path d="M4 4v7" /></>,
  legend: <><path d="M1 1h12v12H1zM1 3h12" strokeWidth="1.800" /><path d="M3 6h3M3 10h3M8 6h3M8 10h3" strokeWidth="2" /></>,
  schedule: <><path d="M1 1h12v12H1zM1 3h12" strokeWidth="1.600" /><path d="M5 3v10M9 3v10" /></>,
  sheets: <><path d="M1 1h8l4 4v8H1z" strokeWidth="1.400" /><path d="M4 11V6h5v5M6 8v3M9 1v4h4" /></>,
}

function TreeNode({ item, guides, last }: { item: TreeItem; guides: boolean[]; last: boolean }) {
  const kids = item.kids ?? []
  return (
    <li>
      <div className="flex items-center h-3 whitespace-nowrap">
        {guides.map((on, i) => (
          <span key={i} className="w-[13px] h-3 shrink-0 flex justify-center">
            {on && <span className="border-l border-dashed border-[#b5b5b5]" />}
          </span>
        ))}
        <svg viewBox="0 0 18 12" className={clsx("h-3 shrink-0", item.icon ? "w-[13px]" : "w-[18px]")} preserveAspectRatio="xMinYMid slice" fill="none" stroke="#b0b0b0">
          <path d={last ? "M6.500 0v6" : "M6.500 0v12"} strokeDasharray="2 1" />
          <path d="M6.500 6.500H16" strokeDasharray="2 1" />
          {item.mark && (
            <>
              <path d="M4 4h5v5H4z" fill="#fff" stroke="#999" />
              <path d={item.mark === "plus" ? "M5 6.500h3M6.500 5v3" : "M5 6.500h3"} stroke="#333" />
            </>
          )}
        </svg>
        {item.icon && <Tool className="w-[11px] h-[11px] mr-1">{treeIcons[item.icon]}</Tool>}
        <span className={clsx("leading-[11px]", item.tone)}>{item.t}</span>
      </div>
      {kids.length > 0 && (
        <ul>
          {kids.map((k, i) => (
            <TreeNode key={k.t} item={k} guides={[...guides, !last]} last={i === kids.length - 1 && !k.open} />
          ))}
        </ul>
      )}
    </li>
  )
}

function Browser() {
  return (
    <aside className="w-[217px] shrink-0 flex flex-col ml-[5px]">
      <PaletteTitle title="Project Browser - lophocrevit-building" />
      <div className="flex flex-1 min-h-0 border-l border-t border-[#444] bg-[#fdfdfd] overflow-hidden">
        <ul className="flex-1 min-w-0 pt-[1px] overflow-hidden">
          {tree.map((n, i) => (
            <TreeNode key={n.t} item={n} guides={[]} last={i === tree.length - 1 && !n.open} />
          ))}
        </ul>
        <div className="w-[11px] flex flex-col items-center bg-[#f3f3f3]">
          <Chevron d={UP} className="my-[2px]" />
          <span className="w-[10px] h-[213px] bg-[#cdcdcd]" />
          <span className="flex-1" />
          <Chevron d={DOWN} className="mb-[1px]" />
        </div>
      </div>
    </aside>
  )
}

/* ---------- status bar ---------- */

function StatusBar() {
  return (
    <footer className="flex items-center h-4 pb-px bg-linear-to-b from-[#e6e6e6] to-[#c4c4c4] border-t border-[#8a8a8a]">
      <div className="flex items-center w-[652px]">
        <button className="w-[36px] h-[14px] bg-[#f8f8f8] border border-[#c4c4c4]">Cancel</button>
        <div className="relative w-[86px] h-[14px] ml-[2px] bg-[#303030]">
          <div className="h-full bg-[#12b012]" style={{ width: "29%" }} />
          <span className="absolute inset-0 text-center leading-[14px] text-[#2fa52f]">29 %</span>
        </div>
        <span className="pl-[2px] whitespace-pre">{"Processing : Viewer Animator : Playlophocrevit-building - 3D View: {3D}   [ 30 of 49 ]  [ Elapsed Time : 0:00:00:50 ]"}</span>
      </div>
      <Tool><path d="M2 6h4v6H2zM8 6h4v6H8zM3 5a4 4 0 018 0M6 9h2" stroke="#2c6b80" strokeWidth="1.400" /></Tool>
      <label className="relative flex items-center ml-[5px]">
        <select aria-label="Workset" className="appearance-none w-[138px] h-[13px] bg-[#f6f6f6] border border-[#ccc]"><option></option></select>
        <Chevron d={DOWN} className="absolute right-[1px]" />
      </label>
      <button className="flex items-center ml-1 gap-[2px]">
        <Tool><path d="M3 1h8L7 6zM3 2l-1 2M7 6v3M3 13c0-3 5-3 6-4M2 12h6" strokeWidth="1.300" /></Tool>
        :0
      </button>
      <button aria-label="Design options" className="ml-[14px]"><Tool><path d="M1 2h12v11H1zM1 4h12M4 6v5M6 7h4M8 7v4" strokeWidth="1.300" /></Tool></button>
      <button aria-label="Active only" className="ml-[6px]"><Tool><path d="M2 2h11v8H2zM2 4h11M4 7h6M1 8v5h5" stroke="#2b5f9a" strokeWidth="1.400" /></Tool></button>
      <label className="relative flex items-center ml-1">
        <select aria-label="Active design option" className="appearance-none w-[104px] h-[13px] bg-[#f6f6f6] border border-[#ccc] pl-[2px] text-[#777]"><option>Main Model</option></select>
        <Chevron d={DOWN} className="absolute right-[1px]" />
      </label>
      <div className="flex items-center gap-[6px] ml-auto pr-[44px]">
        <button aria-label="Select links"><Tool><path d="M1 3l5-1 6 1-1 4-5-1-3 1z" fill="#ecc24a" stroke="#b88a1a" /><path d="M7 6v7l2-2 2 2" fill="#fff" /></Tool></button>
        <button aria-label="Select underlay"><Tool><path d="M1 10l4-6h4M1 12h10M3 8h7" stroke="#2b6a9a" strokeWidth="1.400" /><path d="M8 1l5 5M13 1L8 6" stroke="#c22" strokeWidth="1.600" /></Tool></button>
        <button aria-label="Select pinned"><Tool><path d="M3 1h7v6H3z" fill="#eba14a" stroke="#b8661a" /><path d="M1 8h8M5 8v5M8 7v6l2-2 2 2" /></Tool></button>
        <button aria-label="Select by face"><Tool><path d="M8 3H2v9h8V8" stroke="#2b6a9a" strokeWidth="1.500" /><path d="M8 1l5 5M13 1L8 6" stroke="#c22" strokeWidth="1.600" /></Tool></button>
        <button aria-label="Drag elements"><Tool><path d="M5 1v8M1 5h8M4 2l1-1 1 1M2 4L1 5l1 1" /><path d="M8 6v7l2-2 3 1z" fill="#fff" /></Tool></button>
        <button className="flex items-center"><Tool><path d="M1 2h12L8 8v5l-2-1V8z" fill="#e8eef4" stroke="#44566a" strokeWidth="1.300" /></Tool>:0</button>
      </div>
    </footer>
  )
}

export default function App() {
  return (
    <div className="flex flex-col h-screen min-w-[1140px] overflow-hidden bg-[#dedede] text-[8px] leading-3 text-[#111] font-['Roboto','Noto_Sans',sans-serif]">
      <TitleBar />
      <Tabs />
      <Ribbon />
      <div className="h-5 shrink-0 bg-[#dedede]" />
      <div className="flex flex-1 min-h-0 pb-[3px]">
        <Properties />
        <Viewport />
        <Browser />
      </div>
      <StatusBar />
    </div>
  )
}
